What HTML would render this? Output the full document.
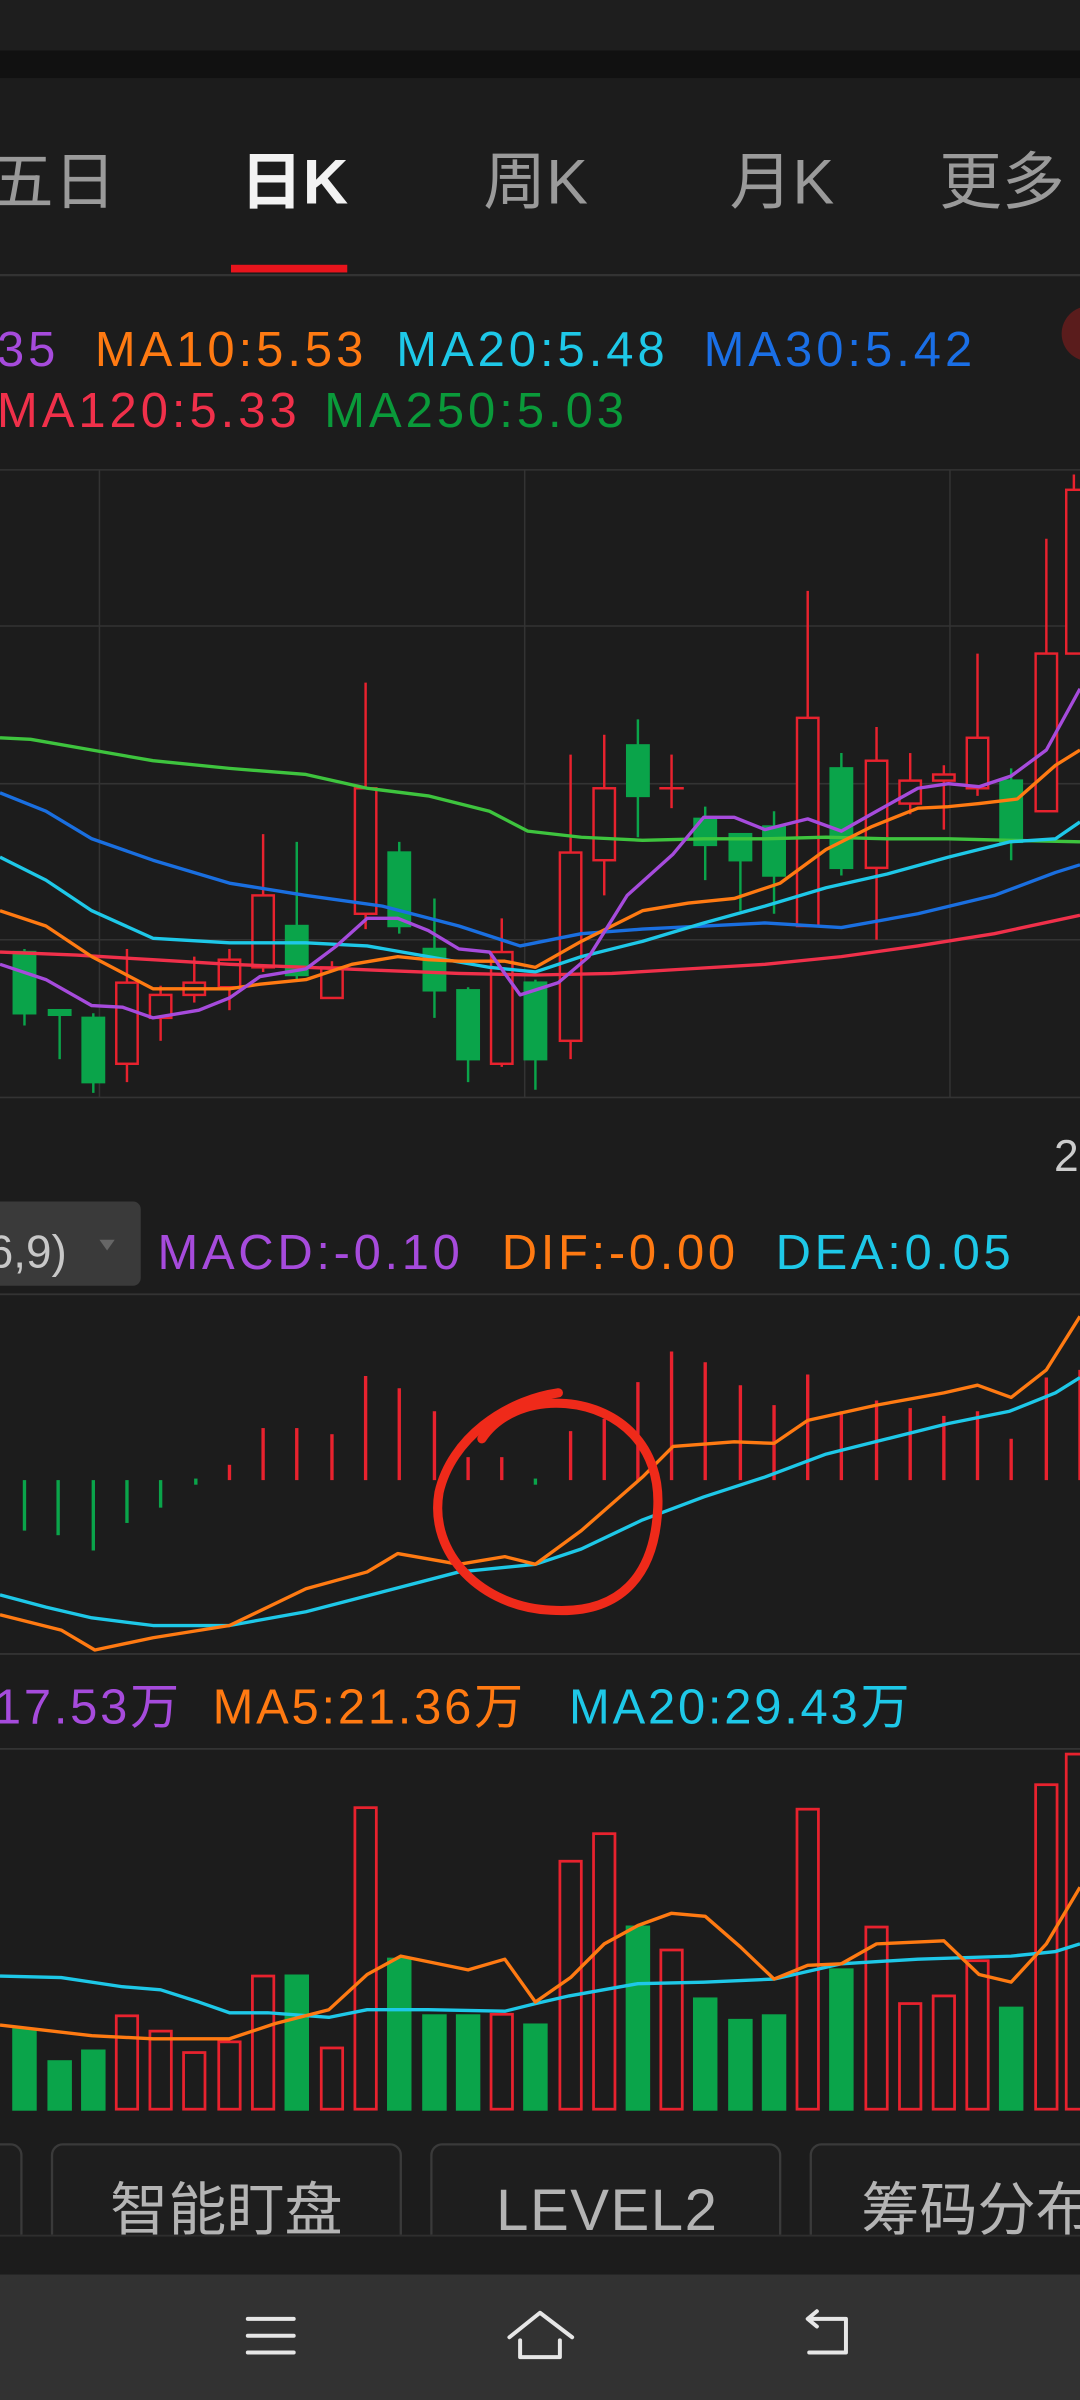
<!DOCTYPE html>
<html><head><meta charset="utf-8"><style>
html,body{margin:0;padding:0;background:#1c1c1c;width:1080px;height:2400px;overflow:hidden}
svg{display:block}
text{font-family:"Liberation Sans","Noto Sans CJK SC",sans-serif}
</style></head><body>
<svg width="1080" height="2400" viewBox="0 0 706 1568" preserveAspectRatio="none" xmlns="http://www.w3.org/2000/svg">
<rect x="0" y="0" width="706" height="1568" fill="#1c1c1c"/>
<rect x="0" y="0" width="706" height="33" fill="#1e1e1e"/>
<rect x="0" y="33" width="706" height="18" fill="#111"/>
<!-- tabs -->
<g font-size="41" fill="#9a9a9a">
<text x="-6" y="133">五日</text>
<text x="157" y="133" fill="#f2f2f2" font-weight="bold">日K</text>
<text x="316" y="133">周K</text>
<text x="477" y="133">月K</text>
<text x="614" y="133">更多</text>
</g>
<rect x="151" y="173" width="76" height="5" fill="#e8141c"/>
<rect x="0" y="179" width="706" height="1.5" fill="#333"/>
<!-- legend -->
<g font-size="32" letter-spacing="2.6">
<text x="-2" y="239" fill="#a64bdc">35</text>
<text x="62" y="239" fill="#ff7a12">MA10:5.53</text>
<text x="259" y="239" fill="#1ec8e8">MA20:5.48</text>
<text x="460" y="239" fill="#1a6fe6">MA30:5.42</text>
<text x="-2" y="279" fill="#f0304a">MA120:5.33</text>
<text x="212" y="279" fill="#0a9a3a">MA250:5.03</text>
</g>
<circle cx="712" cy="218" r="18" fill="#5a1c1c"/>
<!-- grid -->
<g stroke="#333" stroke-width="1">
<line x1="0" y1="307" x2="706" y2="307"/><line x1="0" y1="409" x2="706" y2="409"/>
<line x1="0" y1="512" x2="706" y2="512"/><line x1="0" y1="614" x2="706" y2="614"/>
<line x1="0" y1="717" x2="706" y2="717"/>
<line x1="65" y1="307" x2="65" y2="717"/><line x1="343" y1="307" x2="343" y2="717"/><line x1="621" y1="307" x2="621" y2="717"/>
</g>
<!-- candles -->
<g stroke-width="1.6">
<g stroke="#e8222e" fill="none">
<line x1="83" y1="620" x2="83" y2="707"/><rect x="76" y="642" width="14" height="53" fill="#1c1c1c"/>
<line x1="105" y1="644" x2="105" y2="680"/><rect x="98" y="650" width="14" height="15" fill="#1c1c1c"/>
<line x1="127" y1="625" x2="127" y2="655"/><rect x="120" y="642" width="14" height="8" fill="#1c1c1c"/>
<line x1="150" y1="620" x2="150" y2="660"/><rect x="143" y="627" width="14" height="18" fill="#1c1c1c"/>
<line x1="172" y1="545" x2="172" y2="635"/><rect x="165" y="585" width="14" height="47" fill="#1c1c1c"/>
<line x1="217" y1="628" x2="217" y2="652"/><rect x="210" y="632" width="14" height="20" fill="#1c1c1c"/>
<line x1="239" y1="446" x2="239" y2="607"/><rect x="232" y="515" width="14" height="82" fill="#1c1c1c"/>
<line x1="328" y1="600" x2="328" y2="697"/><rect x="321" y="622" width="14" height="73" fill="#1c1c1c"/>
<line x1="373" y1="493" x2="373" y2="692"/><rect x="366" y="557" width="14" height="123" fill="#1c1c1c"/>
<line x1="395" y1="480" x2="395" y2="585"/><rect x="388" y="515" width="14" height="47" fill="#1c1c1c"/>
<line x1="439" y1="493" x2="439" y2="528"/><line x1="431" y1="515" x2="447" y2="515"/>
<line x1="528" y1="386" x2="528" y2="605"/><rect x="521" y="469" width="14" height="136" fill="#1c1c1c"/>
<line x1="573" y1="475" x2="573" y2="614"/><rect x="566" y="497" width="14" height="70" fill="#1c1c1c"/>
<line x1="595" y1="492" x2="595" y2="532"/><rect x="588" y="510" width="14" height="15" fill="#1c1c1c"/>
<line x1="617" y1="500" x2="617" y2="542"/><rect x="610" y="506" width="14" height="4" fill="#1c1c1c"/>
<line x1="639" y1="427" x2="639" y2="520"/><rect x="632" y="482" width="14" height="33" fill="#1c1c1c"/>
<line x1="684" y1="352" x2="684" y2="530"/><rect x="677" y="427" width="14" height="103" fill="#1c1c1c"/>
<line x1="702" y1="310" x2="702" y2="427"/><rect x="697" y="320" width="14" height="107" fill="#1c1c1c"/>
</g>
<g stroke="#0aa44a" fill="#0aa44a">
<line x1="16" y1="620" x2="16" y2="670"/><rect x="9" y="622" width="14" height="40"/>
<line x1="39" y1="660" x2="39" y2="692"/><rect x="32" y="660" width="14" height="3"/>
<line x1="61" y1="662" x2="61" y2="714"/><rect x="54" y="665" width="14" height="42"/>
<line x1="194" y1="550" x2="194" y2="640"/><rect x="187" y="605" width="14" height="32"/>
<line x1="261" y1="550" x2="261" y2="610"/><rect x="254" y="557" width="14" height="48"/>
<line x1="284" y1="587" x2="284" y2="665"/><rect x="277" y="620" width="14" height="27"/>
<line x1="306" y1="645" x2="306" y2="707"/><rect x="299" y="647" width="14" height="45"/>
<line x1="350" y1="640" x2="350" y2="712"/><rect x="343" y="642" width="14" height="50"/>
<line x1="417" y1="470" x2="417" y2="547"/><rect x="410" y="487" width="14" height="33"/>
<line x1="461" y1="527" x2="461" y2="575"/><rect x="454" y="535" width="14" height="17"/>
<line x1="484" y1="545" x2="484" y2="595"/><rect x="477" y="545" width="14" height="17"/>
<line x1="506" y1="530" x2="506" y2="597"/><rect x="499" y="540" width="14" height="32"/>
<line x1="550" y1="492" x2="550" y2="572"/><rect x="543" y="502" width="14" height="65"/>
<line x1="661" y1="502" x2="661" y2="562"/><rect x="654" y="510" width="14" height="40"/>
</g>
</g>
<!-- MA lines -->
<g fill="none" stroke-width="2.2" stroke-linejoin="round">
<polyline stroke="#3ec43e" points="0,482 20,483 60,490 100,497 150,502 200,506 240,515 280,520 320,530 345,543 380,547 420,549 460,548 500,548 540,547 580,548 620,548 660,549 706,550"/>
<polyline stroke="#1a6fe0" points="0,518 30,530 60,548 100,562 150,577 200,585 250,592 300,605 340,618 380,610 420,607 460,605 500,603 550,606 600,597 650,585 690,570 706,565"/>
<polyline stroke="#1ec8e8" points="0,560 30,575 60,595 100,613 150,616 200,616 240,618 280,625 320,632 350,635 380,625 420,615 460,603 500,592 540,580 580,571 620,560 660,550 690,548 706,537"/>
<polyline stroke="#f0304a" points="0,622 50,624 100,627 150,630 200,632 250,634 300,636 350,637 400,636 450,633 500,630 550,625 600,618 650,610 706,598"/>
<polyline stroke="#ff7a12" points="0,595 30,605 60,625 100,646 150,646 170,643 200,640 230,630 260,625 280,627 300,628 330,628 350,632 380,615 420,595 450,590 480,587 510,577 540,555 570,540 600,528 620,527 640,525 665,522 690,500 706,490"/>
<polyline stroke="#a64bdc" points="0,630 30,640 60,657 80,658 100,665 130,660 150,652 170,638 200,633 220,618 240,600 260,600 280,608 300,620 320,622 340,650 365,642 385,625 410,585 440,558 460,534 480,534 500,542 528,535 550,543 573,530 600,515 620,512 640,514 661,507 684,490 706,450"/>
</g>
<text x="689" y="765" font-size="29" fill="#ccc">2</text>
<!-- MACD header -->
<rect x="-10" y="785" width="102" height="55" rx="5" fill="#3a3a3a"/>
<text x="-8" y="828" font-size="30" fill="#c8c8c8">6,9)</text>
<path d="M65 810 L75 810 L70 817 Z" fill="#666"/>
<g font-size="32" letter-spacing="2.4">
<text x="103" y="829" fill="#a64bdc">MACD:-0.10</text>
<text x="328" y="829" fill="#ff7a12">DIF:-0.00</text>
<text x="507" y="829" fill="#1ec8e8">DEA:0.05</text>
</g>
<rect x="0" y="845" width="706" height="1.2" fill="#333"/>
<rect x="0" y="1080" width="706" height="1.2" fill="#333"/>
<!-- MACD bars -->
<g stroke-width="2.2">
<g stroke="#0aa44a">
<line x1="16" y1="967" x2="16" y2="1000"/><line x1="38" y1="967" x2="38" y2="1003"/><line x1="61" y1="967" x2="61" y2="1013"/>
<line x1="83" y1="967" x2="83" y2="995"/><line x1="105" y1="967" x2="105" y2="985"/><line x1="128" y1="966" x2="128" y2="970"/>
<line x1="350" y1="966" x2="350" y2="970"/>
</g>
<g stroke="#e8222e">
<line x1="150" y1="957" x2="150" y2="967"/><line x1="172" y1="933" x2="172" y2="967"/><line x1="194" y1="933" x2="194" y2="967"/>
<line x1="217" y1="937" x2="217" y2="967"/><line x1="239" y1="899" x2="239" y2="967"/><line x1="261" y1="907" x2="261" y2="967"/>
<line x1="284" y1="922" x2="284" y2="967"/><line x1="306" y1="952" x2="306" y2="967"/><line x1="328" y1="952" x2="328" y2="967"/>
<line x1="373" y1="935" x2="373" y2="967"/><line x1="395" y1="927" x2="395" y2="967"/><line x1="417" y1="903" x2="417" y2="967"/>
<line x1="439" y1="883" x2="439" y2="967"/><line x1="461" y1="890" x2="461" y2="967"/><line x1="484" y1="905" x2="484" y2="967"/>
<line x1="506" y1="918" x2="506" y2="967"/><line x1="528" y1="898" x2="528" y2="967"/><line x1="550" y1="922" x2="550" y2="967"/>
<line x1="573" y1="915" x2="573" y2="967"/><line x1="595" y1="920" x2="595" y2="967"/><line x1="617" y1="925" x2="617" y2="967"/>
<line x1="639" y1="922" x2="639" y2="967"/><line x1="661" y1="940" x2="661" y2="967"/><line x1="684" y1="900" x2="684" y2="967"/><line x1="706" y1="895" x2="706" y2="967"/>
</g>
</g>
<g fill="none" stroke-width="2.2" stroke-linejoin="round">
<polyline stroke="#1ec8e8" points="0,1042 30,1050 60,1057 100,1062 150,1062 200,1053 250,1040 300,1027 350,1022 380,1012 420,993 460,978 500,965 540,950 580,940 620,930 660,922 690,910 706,900"/>
<polyline stroke="#ff7a12" points="0,1055 40,1065 62,1078 100,1070 150,1062 200,1038 240,1027 260,1015 300,1022 330,1017 350,1022 380,1000 420,965 440,945 480,942 506,943 528,928 573,918 617,910 639,905 661,913 684,895 706,860"/>
</g>
<path d="M365 910 C330 915 295 940 287 975 C280 1015 315 1050 360 1052 C405 1055 428 1030 430 985 C432 945 405 920 370 917 C345 915 325 925 315 940" fill="none" stroke="#ef2a1a" stroke-width="6" stroke-linecap="round"/>
<!-- Volume header -->
<g font-size="32" letter-spacing="1.8">
<text x="-4" y="1126" fill="#a64bdc">17.53万</text>
<text x="139" y="1126" fill="#ff7a12">MA5:21.36万</text>
<text x="372" y="1126" fill="#1ec8e8">MA20:29.43万</text>
</g>
<rect x="0" y="1142" width="706" height="1.2" fill="#333"/>
<!-- Volume bars -->
<g stroke-width="1.8">
<g fill="#0aa44a">
<rect x="8" y="1325" width="16" height="54"/><rect x="31" y="1346" width="16" height="33"/><rect x="53" y="1339" width="16" height="40"/>
<rect x="186" y="1290" width="16" height="89"/><rect x="253" y="1279" width="16" height="100"/><rect x="276" y="1316" width="16" height="63"/>
<rect x="298" y="1316" width="16" height="63"/><rect x="342" y="1322" width="16" height="57"/><rect x="409" y="1258" width="16" height="121"/>
<rect x="453" y="1305" width="16" height="74"/><rect x="476" y="1319" width="16" height="60"/><rect x="498" y="1316" width="16" height="63"/>
<rect x="542" y="1286" width="16" height="93"/><rect x="653" y="1311" width="16" height="68"/>
</g>
<g fill="none" stroke="#e8222e">
<rect x="76" y="1317" width="14" height="61"/><rect x="98" y="1327" width="14" height="51"/><rect x="120" y="1341" width="14" height="37"/>
<rect x="143" y="1334" width="14" height="44"/><rect x="165" y="1291" width="14" height="87"/><rect x="210" y="1338" width="14" height="40"/>
<rect x="232" y="1181" width="14" height="197"/><rect x="321" y="1316" width="14" height="62"/><rect x="366" y="1216" width="14" height="162"/>
<rect x="388" y="1198" width="14" height="180"/><rect x="432" y="1274" width="14" height="104"/><rect x="521" y="1182" width="14" height="196"/>
<rect x="566" y="1259" width="14" height="119"/><rect x="588" y="1309" width="14" height="69"/><rect x="610" y="1304" width="14" height="74"/>
<rect x="632" y="1281" width="14" height="97"/><rect x="677" y="1166" width="14" height="212"/><rect x="697" y="1146" width="14" height="232"/>
</g>
</g>
<g fill="none" stroke-width="2.2" stroke-linejoin="round">
<polyline stroke="#1ec8e8" points="0,1291 40,1292 80,1298 105,1300 130,1308 150,1315 175,1315 215,1318 240,1313 280,1313 330,1314 350,1309 372,1304 417,1296 460,1295 506,1293 550,1283 600,1280 661,1278 690,1275 706,1270"/>
<polyline stroke="#ff7a12" points="0,1323 60,1330 100,1332 150,1332 180,1322 215,1313 240,1290 262,1278 306,1287 330,1280 350,1308 373,1292 395,1270 417,1258 439,1250 461,1252 484,1272 506,1293 528,1284 550,1283 573,1270 617,1268 640,1290 661,1295 684,1270 706,1233"/>
</g>
<!-- bottom buttons -->
<g fill="#1e1e1e" stroke="#3a3a3a" stroke-width="1.5">
<rect x="-20" y="1401" width="34" height="80" rx="7"/>
<rect x="34" y="1401" width="228" height="80" rx="7"/>
<rect x="282" y="1401" width="228" height="80" rx="7"/>
<rect x="530" y="1401" width="228" height="80" rx="7"/>
</g>
<g font-size="38" fill="#b4b4b4">
<text x="148" y="1457" text-anchor="middle">智能盯盘</text>
<text x="397" y="1457" text-anchor="middle" letter-spacing="1">LEVEL2</text>
<text x="563" y="1457">筹码分布</text>
</g>
<rect x="0" y="1460" width="706" height="26" fill="#1c1c1c"/>
<rect x="0" y="1460" width="706" height="1.2" fill="#2e2e2e"/>
<rect x="0" y="1486" width="706" height="82" fill="#323232"/>
<!-- nav icons -->
<g stroke="#e6e6e6" stroke-width="2.6" fill="none" stroke-linecap="round" stroke-linejoin="round">
<line x1="162" y1="1515" x2="192" y2="1515"/><line x1="162" y1="1526" x2="192" y2="1526"/><line x1="162" y1="1537" x2="192" y2="1537"/>
<path d="M333 1527 L353 1511 L374 1527"/><path d="M340 1529 L340 1540 L366 1540 L366 1529"/>
<path d="M529 1515 L553 1515 L553 1537 L529 1537"/><path d="M534 1510 L528 1515 L534 1520"/>
</g>
</svg>
</body></html>
